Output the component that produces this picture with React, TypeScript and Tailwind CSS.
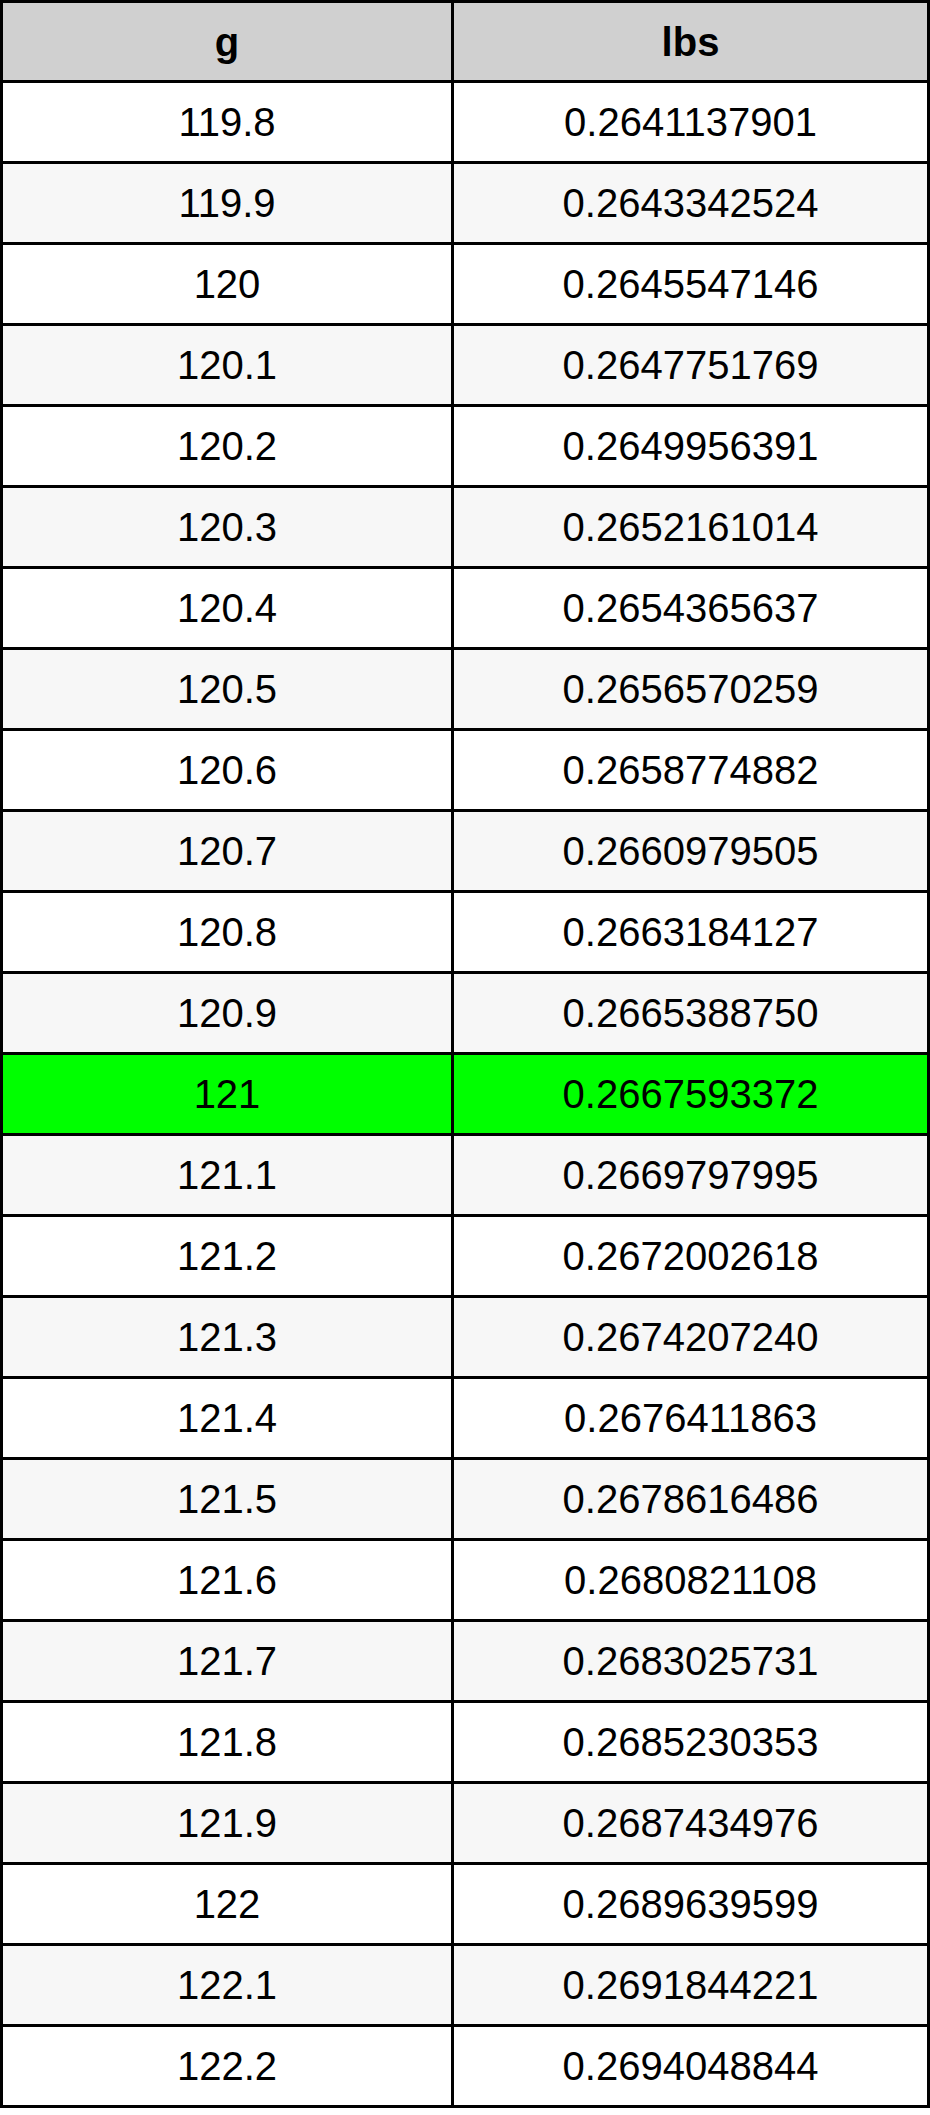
import clsx from 'clsx';

type Row = { g: string; lbs: string };

const rows: Row[] = [
	{ g: '119.8', lbs: '0.2641137901' },
	{ g: '119.9', lbs: '0.2643342524' },
	{ g: '120', lbs: '0.2645547146' },
	{ g: '120.1', lbs: '0.2647751769' },
	{ g: '120.2', lbs: '0.2649956391' },
	{ g: '120.3', lbs: '0.2652161014' },
	{ g: '120.4', lbs: '0.2654365637' },
	{ g: '120.5', lbs: '0.2656570259' },
	{ g: '120.6', lbs: '0.2658774882' },
	{ g: '120.7', lbs: '0.2660979505' },
	{ g: '120.8', lbs: '0.2663184127' },
	{ g: '120.9', lbs: '0.2665388750' },
	{ g: '121', lbs: '0.2667593372' },
	{ g: '121.1', lbs: '0.2669797995' },
	{ g: '121.2', lbs: '0.2672002618' },
	{ g: '121.3', lbs: '0.2674207240' },
	{ g: '121.4', lbs: '0.2676411863' },
	{ g: '121.5', lbs: '0.2678616486' },
	{ g: '121.6', lbs: '0.2680821108' },
	{ g: '121.7', lbs: '0.2683025731' },
	{ g: '121.8', lbs: '0.2685230353' },
	{ g: '121.9', lbs: '0.2687434976' },
	{ g: '122', lbs: '0.2689639599' },
	{ g: '122.1', lbs: '0.2691844221' },
	{ g: '122.2', lbs: '0.2694048844' },
];

const highlighted = '121';

function rowBg(row: Row, index: number) {
	if (row.g === highlighted) return 'bg-[#00ff00]';
	return index % 2 === 0 ? 'bg-white' : 'bg-[#f7f7f7]';
}

function App() {
	return (
		<div className="min-h-screen bg-white font-['Liberation_Sans',Arial,sans-serif] text-black">
			<div className="w-[930px] border-x-[3px] border-t-[3px] border-black">
				<div className="grid h-[80px] grid-cols-[451px_1fr] border-b-[3px] border-black bg-[#d0d0d0] text-[40px] font-bold">
					<div className="flex items-center justify-center border-r-[3px] border-black">g</div>
					<div className="flex items-center justify-center">lbs</div>
				</div>
				{rows.map((row, i) => (
					<div
						key={row.g}
						className={clsx('grid h-[81px] grid-cols-[451px_1fr] border-b-[3px] border-black text-[40px]', rowBg(row, i))}
					>
						<div className="flex items-center justify-center border-r-[3px] border-black">{row.g}</div>
						<div className="flex items-center justify-center">{row.lbs}</div>
					</div>
				))}
			</div>
		</div>
	);
}

export default App;
